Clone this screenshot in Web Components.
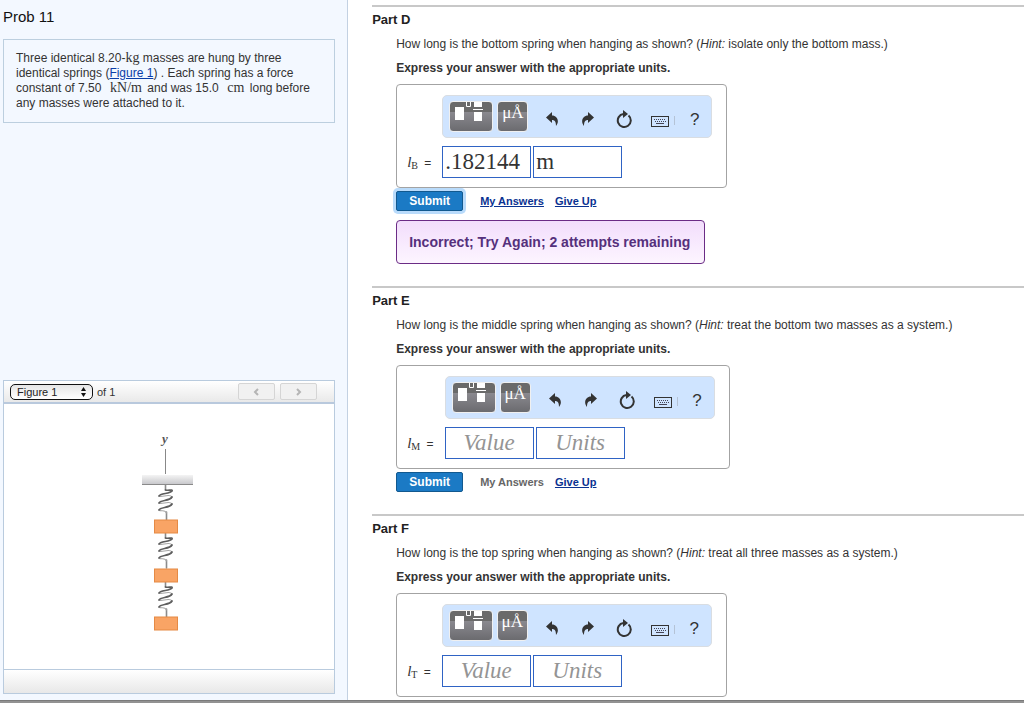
<!DOCTYPE html>
<html lang="en">
<head>
<meta charset="utf-8">
<title>Prob 11</title>
<style>
  html, body { height: 100%; }
  body {
    margin: 0;
    overflow: hidden;
    background: #fff;
    color: #333;
    font: 12px/16px "Liberation Sans", Arial, sans-serif;
  }
</style>
</head>
<body>
<problem-page>
  <problem-card slot="side">Three identical 8.20-<math-unit>kg</math-unit> masses are hung by three identical springs (<text-link>Figure 1</text-link>) . Each spring has a force constant of 7.50 &nbsp;<math-unit spaced>kN/m</math-unit> and was 15.0 &nbsp;<math-unit spaced>cm</math-unit> long before any masses were attached to it.</problem-card>
  <figure-panel slot="side"></figure-panel>

  <problem-part heading="Part D">
    <span slot="question">How long is the bottom spring when hanging as shown? (<i>Hint:</i> isolate only the bottom mass.)</span>
    <answer-box sub="B" value=".182144" units="m"></answer-box>
    <answer-actions focused answered></answer-actions>
    <feedback-message>Incorrect; Try Again; 2 attempts remaining</feedback-message>
  </problem-part>
  <problem-part heading="Part E">
    <span slot="question">How long is the middle spring when hanging as shown? (<i>Hint:</i> treat the bottom two masses as a system.)</span>
    <answer-box sub="M"></answer-box>
    <answer-actions></answer-actions>
  </problem-part>
  <problem-part heading="Part F">
    <span slot="question">How long is the top spring when hanging as shown? (<i>Hint:</i> treat all three masses as a system.)</span>
    <answer-box sub="T"></answer-box>
  </problem-part>
</problem-page>

<script>
class BaseElement extends HTMLElement {
  constructor() {
    super();
    this.attachShadow({ mode: 'open' });
  }
  connectedCallback() {
    this.shadowRoot.innerHTML = `<style>* { box-sizing: border-box; }${this.styles()}</style>${this.template()}`;
  }
  styles() { return ''; }
  template() { return '<slot></slot>'; }
}

/** Two columns over the window's bottom edge. */
class ProblemPage extends BaseElement {
  styles() {
    return `
      :host { display: flex; flex-direction: column; height: 100vh; }
      .columns { flex: 1; display: flex; min-height: 0; }
      aside {
        flex: 0 0 34%;
        display: flex;
        flex-direction: column;
        padding: 8px 12px 6px 3px;
        background: #f3f8ff;
        border-right: 1px solid #c3d1e2;
      }
      h1 { margin: 0 0 13px; font-size: 15px; line-height: 18px; font-weight: normal; color: #111; }
      main { flex: 1; min-width: 0; overflow: hidden; padding: 5px 0 0 24px; }
      footer { height: 3px; background: linear-gradient(#6e6e6e, #929292 50%); }
    `;
  }
  template() {
    return `
      <div class="columns">
        <aside><h1>Prob 11</h1><slot name="side"></slot></aside>
        <main><slot></slot></main>
      </div>
      <footer></footer>
    `;
  }
}

class ProblemCard extends BaseElement {
  styles() {
    return `
      :host {
        display: block;
        padding: 11px 12px;
        border: 1px solid #bccfdf;
        line-height: 15px;
      }
    `;
  }
}

class MathUnit extends BaseElement {
  styles() {
    return `
      :host { font: 14px/12px "Liberation Serif", "Times New Roman", serif; }
      :host([spaced]) { margin: 0 2px; }
    `;
  }
}

class TextLink extends BaseElement {
  styles() { return 'a { color: #0b3ea8; }'; }
  template() { return '<a href="#"><slot></slot></a>'; }
}

class FigurePanel extends BaseElement {
  styles() {
    return `
      :host {
        display: flex;
        flex-direction: column;
        box-sizing: border-box;
        height: 314px;
        margin-top: auto;
        border: 1px solid #b9cbde;
        background: #fff;
      }
      header {
        display: flex;
        align-items: center;
        height: 23px;
        padding: 0 17px 0 6px;
        border-bottom: 2px solid #b9c9dd;
        background: linear-gradient(#fff, #e9e9e9);
      }
      .picker { position: relative; display: flex; margin-right: 4px; }
      select {
        appearance: none;
        width: 83px;
        height: 16px;
        padding: 0 6px;
        border: 1px solid #111;
        border-radius: 5px;
        background: linear-gradient(#e6e6e6, #fff);
        color: #222;
        font: 11px/14px "Liberation Sans", Arial, sans-serif;
      }
      .picker svg { position: absolute; right: 6px; top: 3px; pointer-events: none; }
      .of { flex: 1; font-size: 11px; }
      button {
        width: 37px;
        height: 17px;
        margin-left: 5px;
        padding: 0;
        border: 1px solid #d5d5d5;
        border-radius: 2px;
        background: #f1f1f1;
        line-height: 0;
      }
      .view { flex: 1; padding-top: 21px; text-align: center; line-height: 0; }
      footer { height: 24px; border-top: 1px solid #b9cbde; background: linear-gradient(#fff, #e8e8e8); }
    `;
  }
  template() {
    const chevron = (points) => `<svg width="7" height="8" fill="none" stroke="#b5b5b5" stroke-width="2"><polyline points="${points}"/></svg>`;
    const spring = (y) => `
      <g transform="translate(0 ${y})" fill="none" stroke-linecap="round">
        <path d="M45.500 0V5M46.500 27V35" stroke="#8b8b8b" stroke-width="1.600"/>
        <path d="M39 11C41 13 50 8 52 12M39 18C41 20 50 15 52 19M39 25C41 27 45 24 46.500 28" stroke="#a5a5a5" stroke-width="1.200"/>
        <path d="M45.500 5C48 6 53 4 52 6C50 9 40 8 39 11M52 12C50 16 40 15 39 18M52 19C50 23 40 22 39 25" stroke="#5d5d5d" stroke-width="1.700"/>
      </g>`;
    const mass = (y) => `<rect x="34.500" y="${y}" width="23" height="13" fill="#f9a465" stroke="#e58a45"/>`;
    return `
      <header>
        <div class="picker">
          <select aria-label="Figure"><option>Figure 1</option></select>
          <svg width="7" height="10" fill="#111"><path d="M3.500 0L6 4H1zM3.500 10L6 6H1z"/></svg>
        </div>
        <span class="of">of 1</span>
        <button aria-label="Previous figure">${chevron('5,1 2,4 5,7')}</button>
        <button aria-label="Next figure">${chevron('2,1 5,4 2,7')}</button>
      </header>
      <div class="view">
        <svg width="100" height="215" viewBox="-1 0 100 215">
          <defs>
            <linearGradient id="support" x2="0" y2="1">
              <stop offset="0" stop-color="#f4f4f4"/><stop offset="1" stop-color="#c4c4c8"/>
            </linearGradient>
          </defs>
          <text x="45" y="18" text-anchor="middle" font-family="Liberation Serif, serif" font-size="13" font-style="italic" font-weight="bold" fill="#555">y</text>
          <path d="M45.500 24V49" stroke="#888"/>
          <rect x="22" y="50" width="51" height="10" fill="url(#support)"/>
          <path d="M22 59.500H73" stroke="#8a8a8a"/>
          ${[60, 108, 157].map(spring).join('')}
          ${[95, 144, 192].map(mass).join('')}
        </svg>
      </div>
      <footer></footer>
    `;
  }
}

class ProblemPart extends BaseElement {
  styles() {
    return `
      :host { display: block; padding: 5px 0 22px; border-top: 2px solid #c8c8c8; }
      h2 { margin: 0; font-size: 13px; line-height: 16px; color: #222; }
      .body { padding-left: 24px; }
      p { margin: 8px 0; }
    `;
  }
  template() {
    return `
      <h2>${this.getAttribute('heading')}</h2>
      <div class="body">
        <p><slot name="question"></slot></p>
        <p><b>Express your answer with the appropriate units.</b></p>
        <slot></slot>
      </div>
    `;
  }
}

class AnswerToolbar extends BaseElement {
  styles() {
    return `
      :host {
        display: flex;
        width: 270px;
        height: 43px;
        padding: 5px 0 5px 6px;
        border: 1px solid #d9dde2;
        border-radius: 5px;
        background: #cfe4ff;
      }
      button { flex: none; width: 36px; padding: 4px 0 0; border: 0; background: none; color: #333; line-height: 0; }
      .dark {
        width: 44px;
        margin-right: 4px;
        padding: 0;
        border: 1px solid #f0f0f0;
        border-radius: 4px;
        background: linear-gradient(#6a6a6a 0 33%, #8b8a90 33%, #6b6b6f);
      }
      .dark svg { display: block; }
      .units { width: 31px; margin-right: 6px; padding-bottom: 8px; color: #fff; font: 17px/21px "Liberation Serif", serif; }
      .help { width: 33px; padding-top: 6px; font: 17px/20px "Liberation Sans", Arial, sans-serif; }
    `;
  }
  template() {
    const keys = [3, 5, 7, 9, 11, 13].map((x) => `<path d="M${x + 9} 7h1M${x + 10} 9h1"/>`).join('');
    return `
      <button class="dark" aria-label="Templates">
        <svg width="42" height="29" fill="#fff">
          <path d="M5 5h9v13H5zM24 0h8v5h-8zM24 10h8v9h-8zM23 7h10v1H23z"/>
          <path d="M16.500 -1v5.500h4V-1" fill="none" stroke="#fff"/>
        </svg>
      </button>
      <button class="dark units">μÅ</button>
      <button aria-label="Undo">
        <svg width="14" height="14" fill="#333"><path d="M1 5.500L7 0V3.500C12 3.500 15 9 11 14C11 10 10 8 7 8V11Z"/></svg>
      </button>
      <button aria-label="Redo">
        <svg width="14" height="14" fill="#333"><path d="M13 5.500L7 0V3.500C2 3.500 -1 9 3 14C3 10 4 8 7 8V11Z"/></svg>
      </button>
      <button aria-label="Reset">
        <svg width="18" height="18" fill="none" stroke="#333" stroke-width="2">
          <path d="M13.500 5.500A6.500 6.500 0 1 1 8.500 4"/><path d="M8 0L13 4L8 8Z" fill="#333" stroke="none"/>
        </svg>
      </button>
      <button aria-label="Keyboard">
        <svg width="36" height="18" fill="none" stroke="#333">
          <rect x="9.500" y="6.500" width="17" height="10"/>
          <g stroke="#445" transform="translate(0 2.500)">${keys}<path d="M14 11h8"/></g>
          <path d="M32.500 6v9" stroke="#b5c3d6"/>
        </svg>
      </button>
      <button class="help" aria-label="Help">?</button>
    `;
  }
}

class AnswerBox extends BaseElement {
  styles() {
    return `
      :host {
        display: grid;
        grid-template-columns: auto auto;
        column-gap: 11px;
        row-gap: 8px;
        width: fit-content;
        padding: 10px 14px 9px 10px;
        border: 1px solid #a3a3a3;
        border-radius: 4px;
      }
      answer-toolbar { box-sizing: border-box; grid-column: 2; }
      label { align-self: center; white-space: nowrap; font-size: 12px; }
      label i { font: italic 15px/16px "Liberation Serif", serif; }
      sub { margin-right: 3px; font: 10px/10px "Liberation Serif", serif; vertical-align: -2px; }
      .fields { display: flex; gap: 2px; }
      input {
        width: 89px;
        height: 32px;
        padding: 0 2px;
        border: 1px solid #2f63c4;
        border-radius: 0;
        background: #fff;
        color: #333;
        font: 23px/30px "Liberation Serif", "Times New Roman", serif;
      }
      input:placeholder-shown { text-align: center; }
      input::placeholder { color: #949494; font-style: italic; }
    `;
  }
  template() {
    return `
      <answer-toolbar></answer-toolbar>
      <label for="value"><i>l</i><sub>${this.getAttribute('sub')}</sub> =</label>
      <div class="fields">
        <input id="value" placeholder="Value" value="${this.getAttribute('value') || ''}">
        <input aria-label="Units" placeholder="Units" value="${this.getAttribute('units') || ''}">
      </div>
    `;
  }
}

class AnswerActions extends BaseElement {
  styles() {
    return `
      :host { display: flex; align-items: center; height: 20px; margin-top: 3px; font-size: 11px; font-weight: bold; }
      button {
        width: 67px;
        height: 20px;
        margin-right: 17px;
        padding: 0;
        border: 1px solid #12598f;
        border-radius: 2px;
        background: #1b7ac5;
        color: #fff;
        font: bold 12px/18px "Liberation Sans", Arial, sans-serif;
      }
      :host([focused]) button { box-shadow: 0 0 0 3px #b9dbfb; }
      a { margin-right: 11px; color: #0a3291; }
      a:not([href]) { color: #666; }
    `;
  }
  template() {
    return `
      <button>Submit</button>
      <a ${this.hasAttribute('answered') ? 'href="#"' : ''}>My Answers</a>
      <a href="#">Give Up</a>
    `;
  }
}

class FeedbackMessage extends BaseElement {
  styles() {
    return `
      :host {
        display: block;
        width: fit-content;
        margin-top: 9px;
        padding: 13px 14px 13px 12px;
        border: 1px solid #6b2c86;
        border-radius: 4px;
        background: linear-gradient(#f2ddfc, #fdf5ff);
        color: #55307c;
        font-size: 14px;
        font-weight: bold;
      }
    `;
  }
}

customElements.define('problem-page', ProblemPage);
customElements.define('problem-card', ProblemCard);
customElements.define('math-unit', MathUnit);
customElements.define('text-link', TextLink);
customElements.define('figure-panel', FigurePanel);
customElements.define('problem-part', ProblemPart);
customElements.define('answer-toolbar', AnswerToolbar);
customElements.define('answer-box', AnswerBox);
customElements.define('answer-actions', AnswerActions);
customElements.define('feedback-message', FeedbackMessage);
</script>
</body>
</html>
